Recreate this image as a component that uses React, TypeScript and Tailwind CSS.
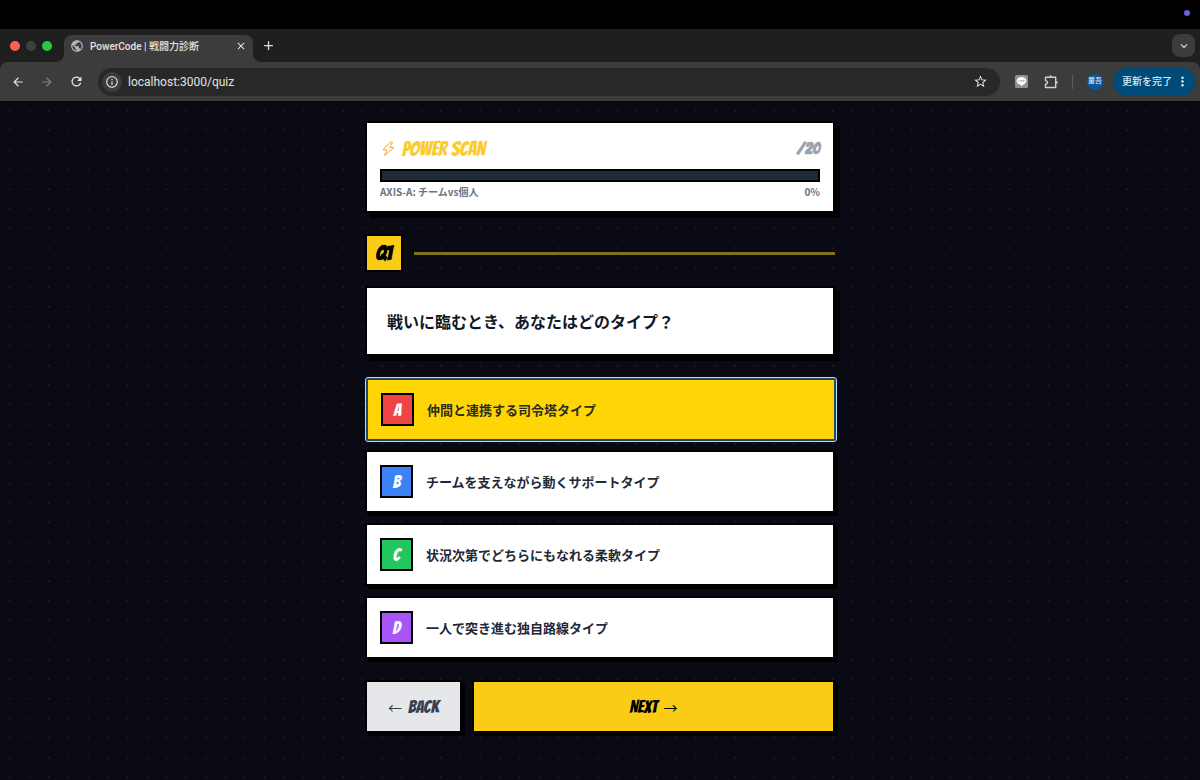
import React, { useState } from 'react';
import {
  MdAdd,
  MdArrowBack,
  MdArrowForward,
  MdClose,
  MdInfoOutline,
  MdKeyboardArrowDown,
  MdMoreVert,
  MdPublic,
  MdRefresh,
  MdStarBorder,
} from 'react-icons/md';

interface QuizOption {
  id: string;
  text: string;
  color: string;
}

const options: QuizOption[] = [
  { id: 'A', text: '仲間と連携する司令塔タイプ', color: 'bg-[#ef4444]' },
  { id: 'B', text: 'チームを支えながら動くサポートタイプ', color: 'bg-[#3b82f6]' },
  { id: 'C', text: '状況次第でどちらにもなれる柔軟タイプ', color: 'bg-[#22c55e]' },
  { id: 'D', text: '一人で突き進む独自路線タイプ', color: 'bg-[#a855f7]' },
];

const display = "font-['Bangers','Liberation_Sans_Narrow','Noto_Sans_CJK_JP',sans-serif]";
const arrow = "font-['Noto_Sans_CJK_JP',sans-serif] text-sm";

const BoltIcon = () => (
  <svg width="16" height="18" viewBox="0 0 16 18" fill="none" stroke="#f5a623" strokeWidth="1" strokeLinejoin="round">
    <path d="M10.5 2 3 9.8 7 10 4.5 15.5 13.7 7.8 9.7 7.3 12.5 2.4Z" />
  </svg>
);

const LineIcon = () => (
  <svg width="13" height="13" viewBox="0 0 13 13">
    <rect width="13" height="13" rx="1.5" fill="#8f8f8f" />
    <path d="M6.5 2C3.8 2 1.6 3.7 1.6 5.9c0 1.9 1.7 3.5 4 3.8.5.1.4.5.3 1.5 2.3-1.2 5.5-3.1 5.5-5.3C11.4 3.7 9.2 2 6.5 2Z" fill="#fff" />
    <path d="M3.5 5v1.7h1M5.3 5v1.7M6.2 6.7V5l1.2 1.7V5M9.6 5h-1v1.7h1M8.6 5.9h1" stroke="#8f8f8f" strokeWidth=".5" fill="none" />
  </svg>
);

const PuzzleIcon = () => (
  <svg width="16" height="16" viewBox="0 0 16 16" fill="none" stroke="#d0d0d0" strokeWidth="1.4" strokeLinejoin="round">
    <path d="M2.5 3.2H12.7V13.5H2.5V10.2C3.9 10 4.5 9.3 4.5 8.4S3.9 6.8 2.5 6.6Z" />
    <path d="M6.2 2.8a1.4 1.6 0 0 1 2.8 0ZM13.2 7a1.6 1.4 0 0 1 0 2.8Z" fill="#d0d0d0" stroke="none" />
  </svg>
);

// Curved foot where the active tab joins the toolbar
const TabFoot = ({ flip }: { flip?: boolean }) => (
  <svg width="8" height="8" viewBox="0 0 8 8" className={flip ? '-scale-x-100' : ''}>
    <path d="M8 0v8H0c4.4 0 8-3.6 8-8Z" fill="#3c3c3c" />
  </svg>
);

const BrowserChrome = () => (
  <header className="bg-[#1f1f1f] font-['Roboto','Noto_Sans_CJK_JP',sans-serif] text-[#e3e3e3]">
    <div className="h-[29px] bg-black flex items-start justify-end p-[10px]">
      <span className="size-[6px] rounded-full bg-[#6461e0]" />
    </div>
    <div className="h-[33px] flex items-center pl-[10px] pr-[5px]">
      <div className="flex gap-[6px]">
        <span className="size-[10px] rounded-full bg-[#ff5f57]" />
        <span className="size-[10px] rounded-full bg-[#3f3f3f]" />
        <span className="size-[10px] rounded-full bg-[#28c840]" />
      </div>
      <div className="flex items-end self-stretch pt-[6px] ml-1">
        <TabFoot />
        <div className="w-[189px] h-full rounded-t-lg bg-[#3c3c3c] flex items-center px-[6px] pb-[5px]">
          <MdPublic size={14} className="text-[#b4b4b4]" />
          <span className="ml-[6px] flex-1 text-[10px] font-medium whitespace-nowrap">PowerCode | 戦闘力診断</span>
          <button aria-label="Close tab"><MdClose size={12} /></button>
        </div>
        <TabFoot flip />
      </div>
      <button aria-label="New tab"><MdAdd size={15} /></button>
      <button aria-label="Search tabs" className="ml-auto size-[23px] rounded-lg bg-[#3c3c3c] flex items-center justify-center">
        <MdKeyboardArrowDown size={14} />
      </button>
    </div>
    <div className="h-[39px] rounded-t-lg bg-[#3c3c3c] flex items-center pl-[11px] pr-[5px]">
      <button aria-label="Back"><MdArrowBack size={14} /></button>
      <button aria-label="Forward" className="ml-[15px] text-[#808080]"><MdArrowForward size={14} /></button>
      <button aria-label="Reload" className="ml-[15px]"><MdRefresh size={15} /></button>
      <div className="ml-[14px] flex-1 h-[28px] rounded-full bg-[#282828] flex items-center pl-1 pr-3">
        <span className="size-5 rounded-full bg-[#3c3c3c] flex items-center justify-center">
          <MdInfoOutline size={14} />
        </span>
        <input
          aria-label="Address"
          defaultValue="localhost:3000/quiz"
          className="ml-[6px] flex-1 bg-transparent text-[12px] outline-none"
        />
        <button aria-label="Bookmark"><MdStarBorder size={15} /></button>
      </div>
      <button aria-label="LINE" className="ml-[15px]"><LineIcon /></button>
      <button aria-label="Extensions" className="ml-[15px]"><PuzzleIcon /></button>
      <span className="ml-[13px] w-px h-[14px] bg-[#5c5c5c]" />
      <button className="ml-[14px] size-4 rounded-full bg-[#0b57a4] text-[7px] font-medium flex items-center justify-center whitespace-nowrap">童吾</button>
      <button className="ml-[10px] h-[28px] rounded-full bg-[#004a77] pl-[9px] pr-[5px] text-[10px] font-medium text-[#d3ecff] flex items-center gap-[3px] whitespace-nowrap">
        更新を完了
        <MdMoreVert size={15} />
      </button>
    </div>
  </header>
);

const DotGrid = () => (
  <svg className="absolute inset-0 size-full" aria-hidden="true">
    <defs>
      <pattern id="dots" width="19.6" height="19.6" patternUnits="userSpaceOnUse">
        <circle cx="9.8" cy="9.8" r=".8" fill="#2c2d38" />
      </pattern>
    </defs>
    <rect width="100%" height="100%" fill="url(#dots)" />
  </svg>
);

const OptionButton: React.FC<{ option: QuizOption; selected: boolean; onSelect: () => void }> = ({
  option,
  selected,
  onSelect,
}) => (
  <button
    onClick={onSelect}
    aria-pressed={selected}
    className={`w-full border-2 p-[13px] flex items-center gap-[13px] text-left ${
      selected
        ? 'translate-x-px translate-y-px rounded-xs border-[#1c4a6e] bg-[#ffd505] outline-1 outline-[#b9d9f8] text-[#2b2d1f]'
        : 'border-black bg-white shadow-[3px_3px_0_#000] text-[#1f2937]'
    }`}
  >
    <span className={`size-[33px] shrink-0 border-2 border-black flex items-center justify-center text-lg text-white ${display} ${option.color}`}>
      {option.id}
    </span>
    <span className="text-[13px] font-bold">{option.text}</span>
  </button>
);

export default function App() {
  const [selected, setSelected] = useState('A');

  return (
    <div className="min-h-screen flex flex-col bg-[#0a0a14]">
      <BrowserChrome />
      <div className="relative flex-1">
        <DotGrid />
        <main className="relative max-w-[470px] mx-auto py-5 font-['Noto_Sans_CJK_JP',sans-serif]">
          {/* Progress */}
          <section className="border-2 border-black bg-white p-[13px] shadow-[5px_5px_0_#000]">
            <div className="h-[26px] flex items-center justify-between">
              <h1 className={`flex items-center gap-[6px] text-xl text-[#fbcb2e] ${display}`}>
                <BoltIcon />
                POWER SCAN
              </h1>
              <span className={`text-base font-bold text-[#9ca3af] ${display}`}>/20</span>
            </div>
            <div role="progressbar" aria-label="POWER SCAN" aria-valuenow={0} className="mt-[7px] h-[13px] border-2 border-black bg-[#1f2937]" />
            <div className="mt-1 flex justify-between text-[10px] leading-3 font-bold text-[#6b7280]">
              <span>AXIS-A: チームvs個人</span>
              <span>0%</span>
            </div>
          </section>

          {/* Question */}
          <div className="mt-[21px] flex items-center gap-[11px]">
            <span className={`size-[38px] border-2 border-black bg-[#facc15] flex items-center justify-center text-xl font-bold text-black ${display}`}>
              Q1
            </span>
            <span className="flex-1 h-[3px] bg-[#82701c]" />
          </div>
          <section className="mt-[14px] border-2 border-black bg-white p-5 shadow-[5px_5px_0_#000]">
            <h2 className="text-[16px] leading-[26px] font-bold text-[#111827]">戦いに臨むとき、あなたはどのタイプ？</h2>
          </section>

          {/* Options */}
          <div className="mt-[21px] flex flex-col gap-[10px]">
            {options.map((option) => (
              <OptionButton
                key={option.id}
                option={option}
                selected={selected === option.id}
                onSelect={() => setSelected(option.id)}
              />
            ))}
          </div>

          {/* Navigation */}
          <div className={`mt-[21px] h-[53px] flex gap-[10px] text-lg ${display}`}>
            <button className="w-[97px] border-2 border-black bg-[#e5e7eb] flex items-center justify-center gap-[6px] text-[#374151] shadow-[3px_3px_0_#000]">
              <span className={arrow}>←</span> BACK
            </button>
            <button className="flex-1 border-2 border-black bg-[#facc15] flex items-center justify-center gap-[6px] text-black shadow-[3px_3px_0_#000]">
              NEXT <span className={arrow}>→</span>
            </button>
          </div>
        </main>
      </div>
    </div>
  );
}
